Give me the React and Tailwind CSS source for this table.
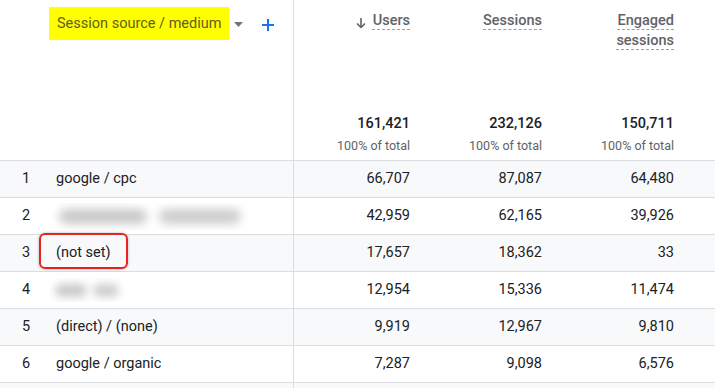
import React from "react";

const rows = [
  { n: 1, label: "google / cpc", u: "66,707", s: "87,087", e: "64,480" },
  { n: 2, blur: "wide", u: "42,959", s: "62,165", e: "39,926" },
  { n: 3, label: "(not set)", mark: true, u: "17,657", s: "18,362", e: "33" },
  { n: 4, blur: "short", u: "12,954", s: "15,336", e: "11,474" },
  { n: 5, label: "(direct) / (none)", u: "9,919", s: "12,967", e: "9,810" },
  { n: 6, label: "google / organic", u: "7,287", s: "9,098", e: "6,576" },
];

function Row({ r }) {
  const gray = r.n % 2 === 1;
  return (
    <div
      className={`grid grid-cols-[294px_132px_132px_132px_1fr] h-[37px] border-b border-[#dadce0] text-[14.5px] text-[#202124] ${
        gray ? "bg-[#f8f9fa]" : "bg-white"
      }`}
    >
      <div className="flex items-center border-r border-[#dadce0]">
        <div className="w-[56px] pl-[22px]">{r.n}</div>
        {r.label && (
          <span className="relative">
            {r.label}
            {r.mark && (
              <span className="absolute left-[-17px] right-[-17px] top-[-9px] bottom-[-5px] rounded-[6px] border-2 border-[#e8221f] shadow-[0_0_3px_rgba(0,0,0,0.3)]" />
            )}
          </span>
        )}
        {r.blur === "wide" && (
          <div className="ml-[-7px] h-[27px] w-[217px] bg-white flex items-center gap-[12px] pl-[10px] overflow-hidden">
            <div className="h-[15px] w-[88px] rounded-full bg-[#c9c9c9] blur-[5px]" />
            <div className="h-[15px] w-[82px] rounded-full bg-[#cdcdcd] blur-[5px]" />
          </div>
        )}
        {r.blur === "short" && (
          <div className="ml-[-16px] h-[24px] w-[104px] bg-white flex items-center gap-[6px] pl-[15px] overflow-hidden">
            <div className="h-[13px] w-[32px] rounded-full bg-[#c9c9c9] blur-[4px]" />
            <div className="h-[13px] w-[26px] rounded-full bg-[#cdcdcd] blur-[4px]" />
          </div>
        )}
      </div>
      <div className="flex items-center justify-end pr-4">{r.u}</div>
      <div className="flex items-center justify-end pr-4">{r.s}</div>
      <div className="flex items-center justify-end pr-4">{r.e}</div>
      <div />
    </div>
  );
}

export default function App() {
  return (
    <div
      className="w-[715px] h-[388px] overflow-hidden bg-white"
      style={{ fontFamily: "Roboto, 'Liberation Sans', sans-serif" }}
    >
      {/* header */}
      <div className="grid grid-cols-[294px_132px_132px_132px_1fr] h-[161px] border-b border-[#dadce0]">
        <div className="border-r border-[#dadce0] flex items-start pt-[7px] pl-[49px]">
          <div className="h-[33px] bg-[#ffff00] pl-[8px] pr-[8px] flex items-center text-[14.5px] text-[#60601a]">
            Session source / medium
          </div>
          <svg width="9" height="5" viewBox="0 0 9 5" className="ml-[5px] mt-[15px]">
            <path d="M0 0 L9 0 L4.5 5 Z" fill="#757575" />
          </svg>
          <svg width="12" height="12" viewBox="0 0 12 12" className="ml-[19px] mt-[12px]">
            <path d="M6 0 V12 M0 6 H12" stroke="#1a73e8" strokeWidth="2" />
          </svg>
        </div>
        {[
          { h: "Users", arrow: true, t: "161,421" },
          { h: "Sessions", t: "232,126" },
          { h: "Engaged sessions", t: "150,711", narrow: true },
        ].map((c) => (
          <div key={c.h} className="flex flex-col items-end pr-4 pt-[11px]">
            <div className="flex items-start">
              {c.arrow && (
                <svg width="10" height="10" viewBox="0 0 10 10" className="mr-[7px] mt-[7px]">
                  <path d="M5 0 V9 M1 5.5 L5 9.5 L9 5.5" stroke="#5f6368" strokeWidth="1.6" fill="none" />
                </svg>
              )}
              <div
                className={`text-[14.5px] leading-[20px] font-medium text-[#5f6368] text-right underline decoration-dashed decoration-[#9aa0a6] decoration-1 underline-offset-[4px] ${
                  c.narrow ? "w-[58px]" : ""
                }`}
              >
                {c.h}
              </div>
            </div>
            <div className="mt-auto mb-[6px] flex flex-col items-end">
              <div className="text-[14.5px] leading-[20px] font-medium text-[#202124]">{c.t}</div>
              <div className="text-[12.5px] leading-[16px] mt-[4px] text-[#5f6368]">100% of total</div>
            </div>
          </div>
        ))}
        <div />
      </div>
      {rows.map((r) => (
        <Row key={r.n} r={r} />
      ))}
      <div className="grid grid-cols-[294px_1fr] h-[37px] bg-[#f8f9fa]">
        <div className="border-r border-[#dadce0]" />
        <div />
      </div>
    </div>
  );
}
